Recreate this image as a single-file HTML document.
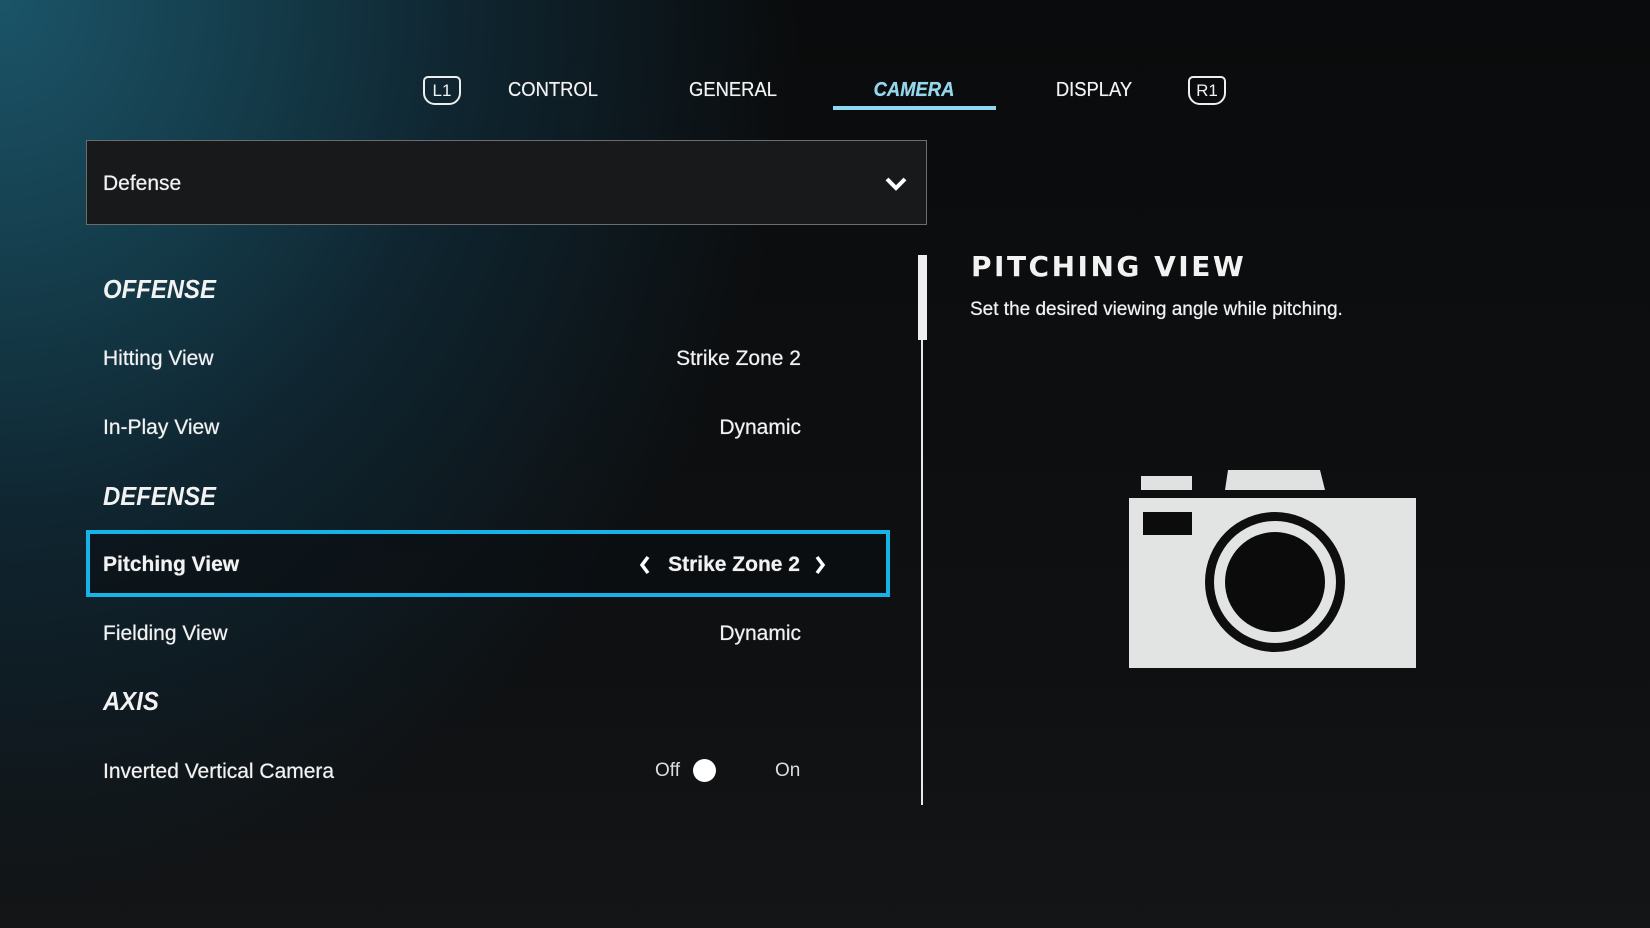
<!DOCTYPE html>
<html><head><meta charset="utf-8"><style>
*{margin:0;padding:0;box-sizing:border-box}
body{width:1650px;height:928px;overflow:hidden;position:relative;font-family:"Liberation Sans",sans-serif;color:#f2f2f2;
background:radial-gradient(ellipse 800px 900px at 0px 0px,#1b5468 0%,#153f4e 28%,#0f2530 58%,rgba(12,14,16,0) 100%),linear-gradient(180deg,#0a0b0c,#0e1012 70%,#131517);}
.a{position:absolute;white-space:nowrap}
.tab{font-size:20px;top:79px;transform:translateX(-50%) scaleX(.92);text-shadow:0 0 .5px #fff}
.row{font-size:21px;text-shadow:0 0 .6px #fff}
.hd{font-size:26px;font-weight:bold;font-style:italic;transform:scaleX(.92);transform-origin:left}
.val{font-size:21px;text-align:right;text-shadow:0 0 .6px #fff}
.badge{position:absolute;top:76px;width:38px;height:29px;border:2px solid #eee;border-radius:5px 5px 12px 12px;font-size:17px;text-align:center;line-height:25px}
</style></head><body>
<div class="badge" style="left:423px">L1</div>
<div class="a tab" style="left:553px">CONTROL</div>
<div class="a tab" style="left:733px">GENERAL</div>
<div class="a tab" style="left:914px;color:#8fd8f0;font-weight:bold;font-style:italic">CAMERA</div>
<div class="a" style="left:833px;top:106px;width:163px;height:4px;background:#8fd8f0"></div>
<div class="a tab" style="left:1094px">DISPLAY</div>
<div class="badge" style="left:1188px">R1</div>

<div class="a" style="left:86px;top:140px;width:841px;height:85px;background:#17191b;border:1px solid #6a6c6e"></div>
<div class="a row" style="left:103px;top:172px">Defense</div>
<svg class="a" style="left:884px;top:176px" width="24" height="16"><path d="M3 3 L12 12 L21 3" stroke="#fff" stroke-width="4" fill="none"/></svg>

<div class="a hd" style="left:103px;top:274px">OFFENSE</div>
<div class="a row" style="left:103px;top:347px">Hitting View</div>
<div class="a val" style="right:849px;top:347px">Strike Zone 2</div>
<div class="a row" style="left:103px;top:416px">In-Play View</div>
<div class="a val" style="right:849px;top:416px">Dynamic</div>
<div class="a hd" style="left:103px;top:481px">DEFENSE</div>
<div class="a" style="left:86px;top:530px;width:804px;height:67px;border:4px solid #17b2e8;background:rgba(10,14,16,.6)"></div>
<div class="a row" style="left:103px;top:553px;font-weight:bold">Pitching View</div>
<svg class="a" style="left:638px;top:554px" width="14" height="22"><path d="M10 3 L4 11 L10 19" stroke="#fff" stroke-width="3.5" fill="none"/></svg>
<div class="a val" style="right:850px;top:553px;font-weight:bold">Strike Zone 2</div>
<svg class="a" style="left:813px;top:554px" width="14" height="22"><path d="M4 3 L10 11 L4 19" stroke="#fff" stroke-width="3.5" fill="none"/></svg>
<div class="a row" style="left:103px;top:622px">Fielding View</div>
<div class="a val" style="right:849px;top:622px">Dynamic</div>
<div class="a hd" style="left:103px;top:686px">AXIS</div>
<div class="a row" style="left:103px;top:760px">Inverted Vertical Camera</div>
<div class="a" style="left:655px;top:760px;font-size:19px;color:#ddd">Off</div>
<div class="a" style="left:693px;top:759px;width:23px;height:23px;border-radius:50%;background:#fff"></div>
<div class="a" style="left:775px;top:760px;font-size:19px;color:#ddd">On</div>

<div class="a" style="left:921px;top:255px;width:2px;height:550px;background:#e8e8e8"></div>
<div class="a" style="left:918px;top:255px;width:9px;height:85px;background:#eee"></div>

<div class="a" style="left:971px;top:250px;font-family:'DejaVu Sans',sans-serif;font-weight:bold;font-size:28px;letter-spacing:2.5px">PITCHING VIEW</div>
<div class="a" style="left:970px;top:299px;font-size:19px;text-shadow:0 0 .6px #fff">Set the desired viewing angle while pitching.</div>

<svg class="a" style="left:1125px;top:466px" width="300" height="210">
<rect x="16" y="10" width="51" height="14" fill="#e0e2e2"/>
<path d="M103 4 L195 4 L200 24 L100 24 Z" fill="#e0e2e2"/>
<rect x="4" y="32" width="287" height="170" fill="#e2e3e3"/>
<rect x="18" y="46" width="49" height="23" fill="#0c0c0c"/>
<circle cx="150" cy="116" r="70" fill="#0e0e0e"/>
<circle cx="150" cy="116" r="61" fill="#e2e3e3"/>
<circle cx="150" cy="116" r="50" fill="#0b0b0b"/>
</svg>
</body></html>
